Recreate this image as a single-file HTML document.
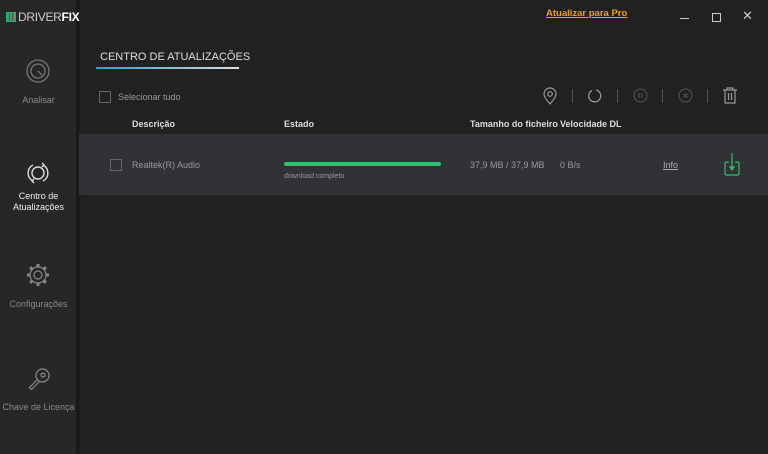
<!DOCTYPE html>
<html><head><meta charset="utf-8"><style>
*{margin:0;padding:0;box-sizing:border-box}
body{width:768px;height:454px;background:#222021;font-family:"Liberation Sans",sans-serif;position:relative;overflow:hidden;color:#bbb}
.side{position:absolute;left:0;top:0;width:77px;height:454px;background:#282627;border-right:1px solid #1a1819;box-shadow:2px 0 3px rgba(0,0,0,.35)}
.abs{position:absolute}
.lbl{position:absolute;width:77px;text-align:center;font-size:9px;color:#8a8889}
.hdr{font-size:9px;font-weight:bold;color:#ddd;position:absolute;top:119px}
.cb{position:absolute;width:12px;height:12px;border:1px solid #666}
.sep{position:absolute;top:89px;width:1px;height:14px;background:#555}
</style></head><body>
<div class="side">
 <div class="abs" style="left:6px;top:12px;width:10px;height:10px;border:1px solid #3a8;background:repeating-linear-gradient(90deg,#2a6 0 2px,#a33 2px 3px)"></div>
 <div class="abs" style="left:18px;top:10px;font-size:12px;color:#ccc;letter-spacing:-.3px">DRIVER<b style="color:#fff">FIX</b></div>
 <svg class="abs" style="left:26px;top:59px" width="24" height="24" viewBox="0 0 24 24" fill="none" stroke="#777" stroke-width="1.3"><circle cx="12" cy="12" r="11"/><circle cx="12" cy="12" r="7"/><path d="M12 12l4 4"/></svg>
 <div class="lbl" style="top:95px">Analisar</div>
 <svg class="abs" style="left:25px;top:161px" width="26" height="24" viewBox="0 0 26 24" fill="none" stroke="#ddd" stroke-width="1.4"><path d="M8 4A9 9 0 0 0 8 20M18 4A9 9 0 0 1 18 20"/><circle cx="13" cy="12" r="6"/><path d="M17 2l2 2-2 2M9 22l-2-2 2-2"/></svg>
 <div class="lbl" style="top:191px;color:#eee;line-height:11px">Centro de<br>Atualizações</div>
 <svg class="abs" style="left:26px;top:263px" width="24" height="24" viewBox="0 0 24 24" fill="none" stroke="#888" stroke-width="1.2"><circle cx="12" cy="12" r="4"/><circle cx="12" cy="12" r="8"/><g stroke-width="3"><path d="M12 1v3M12 20v3M1 12h3M20 12h3M4.2 4.2l2.1 2.1M17.7 17.7l2.1 2.1M4.2 19.8l2.1-2.1M17.7 6.3l2.1-2.1"/></g></svg>
 <div class="lbl" style="top:299px">Configurações</div>
 <svg class="abs" style="left:27px;top:367px" width="24" height="24" viewBox="0 0 24 24" fill="none" stroke="#888" stroke-width="1.2"><circle cx="15.5" cy="8.5" r="6.5"/><circle cx="16" cy="8" r="2"/><path d="M10.5 12.5L2.5 20.5l2 2 8-8"/></svg>
 <div class="lbl" style="top:402px">Chave de Licença</div>
</div>
<div class="abs" style="left:546px;top:8px;font-size:9.5px;color:#e8a317;text-decoration:underline;font-weight:bold">Atualizar para Pro</div>
<div class="abs" style="left:680px;top:18px;width:9px;height:1px;background:#ccc"></div>
<div class="abs" style="left:712px;top:13px;width:9px;height:9px;border:1px solid #ccc"></div>
<div class="abs" style="left:742px;top:8px;font-size:13px;color:#ccc">✕</div>
<div class="abs" style="left:100px;top:51px;font-size:11px;color:#ddd">CENTRO DE ATUALIZAÇÕES</div>
<div class="abs" style="left:96px;top:67px;width:143px;height:2px;background:linear-gradient(90deg,#2aa0c8,#ddd)"></div>
<div class="cb" style="left:99px;top:91px"></div>
<div class="abs" style="left:118px;top:92px;font-size:9px;color:#999">Selecionar tudo</div>
<svg class="abs" style="left:542px;top:87px" width="16" height="18" viewBox="0 0 16 18" fill="none" stroke="#999" stroke-width="1.2"><path d="M8 17C3 11 2 9 2 7a6 6 0 0 1 12 0c0 2-1 4-6 10z"/><circle cx="8" cy="7" r="2.3"/></svg>
<div class="sep" style="left:572px"></div>
<svg class="abs" style="left:587px;top:88px" width="16" height="16" viewBox="0 0 16 16" fill="none" stroke="#999" stroke-width="1.3"><path d="M5 2.5A6 6 0 1 0 9 2"/></svg>
<div class="sep" style="left:617px"></div>
<svg class="abs" style="left:633px;top:88px" width="15" height="15" viewBox="0 0 15 15" fill="none" stroke="#555" stroke-width="1"><circle cx="7.5" cy="7.5" r="6.5"/><path d="M6 5v5M9 5v5"/></svg>
<div class="sep" style="left:662px"></div>
<svg class="abs" style="left:678px;top:88px" width="15" height="15" viewBox="0 0 15 15" fill="none" stroke="#555" stroke-width="1"><circle cx="7.5" cy="7.5" r="6.5"/><path d="M5.5 5.5l4 4M9.5 5.5l-4 4"/></svg>
<div class="sep" style="left:707px"></div>
<svg class="abs" style="left:722px;top:87px" width="16" height="18" viewBox="0 0 16 18" fill="none" stroke="#999" stroke-width="1.2"><path d="M1 3h14M5 3V1h6v2M3 3v13h10V3M6.5 6v7M9.5 6v7"/></svg>
<div class="hdr" style="left:132px">Descrição</div>
<div class="hdr" style="left:284px">Estado</div>
<div class="hdr" style="left:470px">Tamanho do ficheiro</div>
<div class="hdr" style="left:560px">Velocidade DL</div>
<div class="abs" style="left:79px;top:134px;width:689px;height:61px;background:#303236"></div>
<div class="cb" style="left:110px;top:159px"></div>
<div class="abs" style="left:132px;top:160px;font-size:9px;color:#999">Realtek(R) Audio</div>
<div class="abs" style="left:284px;top:162px;width:157px;height:4px;border-radius:2px;background:#2fbf71"></div>
<div class="abs" style="left:284px;top:173px;font-size:7px;color:#999">download completo</div>
<div class="abs" style="left:470px;top:160px;font-size:9px;color:#999">37,9 MB / 37,9 MB</div>
<div class="abs" style="left:560px;top:160px;font-size:9px;color:#999">0 B/s</div>
<div class="abs" style="left:663px;top:160px;font-size:9px;color:#aaa;text-decoration:underline">Info</div>
<svg class="abs" style="left:722px;top:152px" width="20" height="26" viewBox="0 0 20 26" fill="none" stroke="#2fbf71" stroke-width="1.2"><path d="M7 10H4.5a1.5 1.5 0 0 0-1.5 1.5v10A1.5 1.5 0 0 0 4.5 23h11a1.5 1.5 0 0 0 1.5-1.5v-10A1.5 1.5 0 0 0 15.5 10H13"/><path d="M10 1v14"/><path d="M8 15h4l-2 3z" fill="#2fbf71"/></svg>
</body></html>
